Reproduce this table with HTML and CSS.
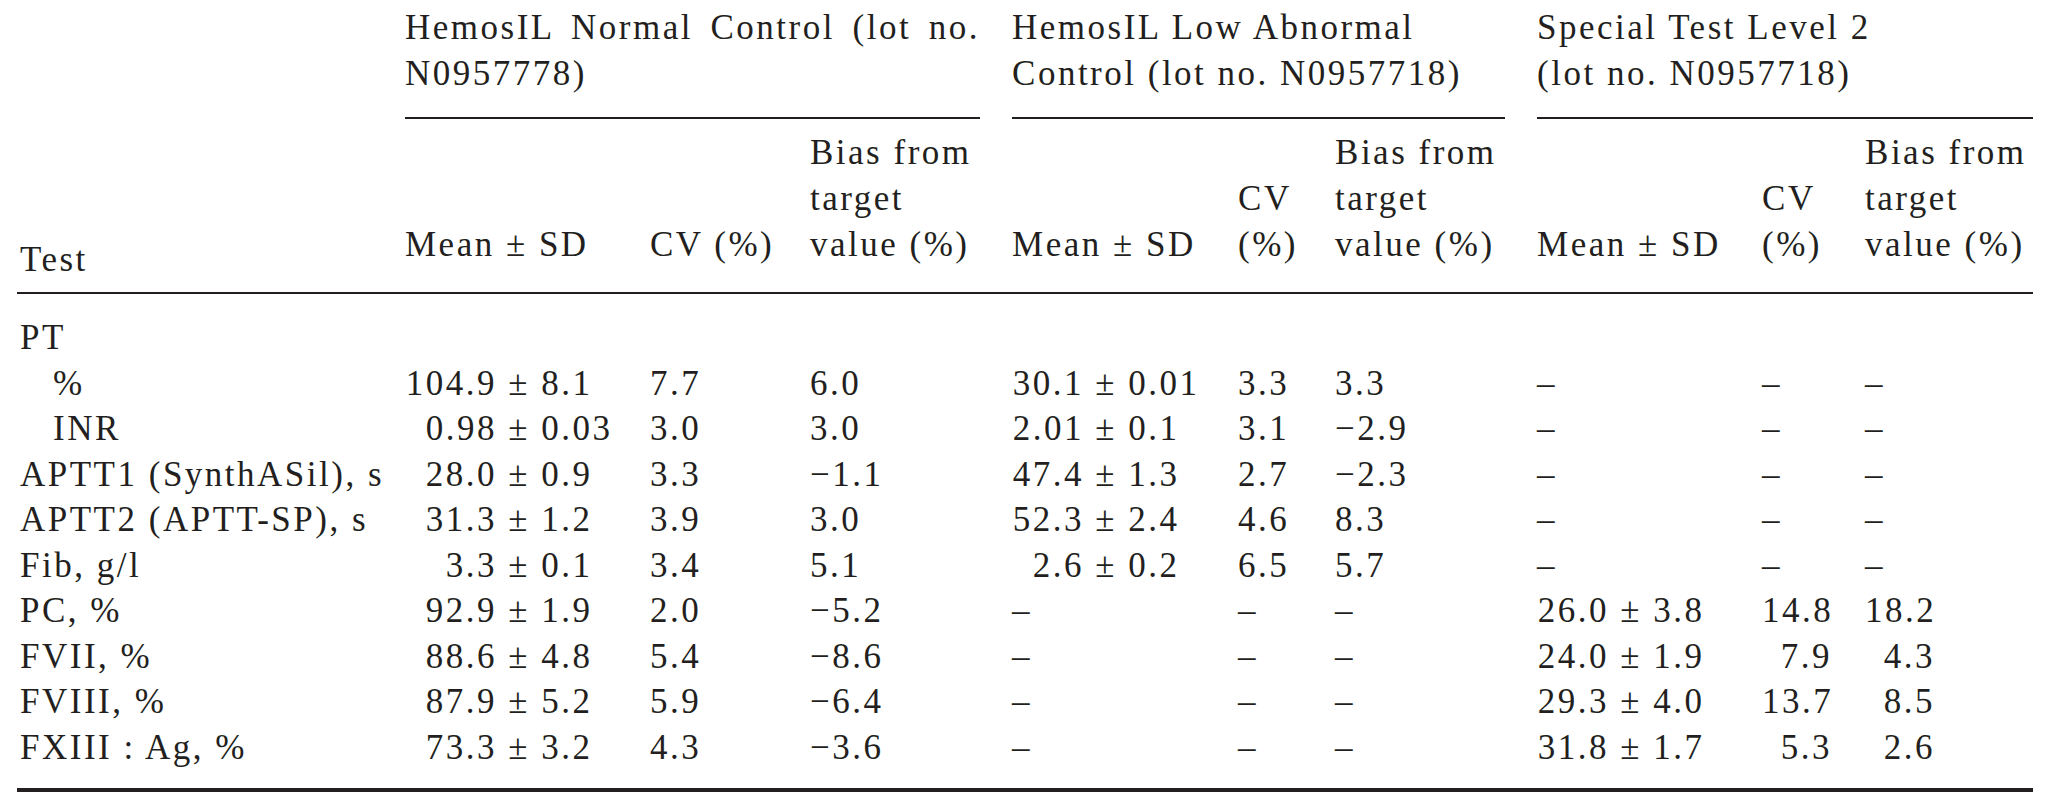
FILE: index.html
```html
<!DOCTYPE html>
<html lang="en">
<head>
<meta charset="utf-8">
<title>Quality control results</title>
<link rel="stylesheet" href="styles.css">
</head>
<body>
<table class="tbl">
  <colgroup>
    <col class="w-test">
    <col class="w-m1"><col class="w-cv1"><col class="w-b1">
    <col class="w-m2"><col class="w-cv2"><col class="w-b2">
    <col class="w-m3"><col class="w-cv3"><col class="w-b3">
  </colgroup>
  <thead>
    <tr class="hrow1">
      <th class="blank"></th>
      <th class="grp gap" colspan="3"><div class="grp-title"><span class="jline">HemosIL Normal Control (lot no.</span><span class="line">N0957778)</span></div></th>
      <th class="grp gap" colspan="3"><div class="grp-title">HemosIL Low Abnormal<br>Control (lot no. N0957718)</div></th>
      <th class="grp" colspan="3"><div class="grp-title">Special Test Level 2<br>(lot no. N0957718)</div></th>
    </tr>
    <tr class="hrow2">
      <th class="th-test">Test</th>
      <th>Mean ± SD</th>
      <th>CV (%)</th>
      <th>Bias from<br>target<br>value (%)</th>
      <th>Mean ± SD</th>
      <th>CV<br>(%)</th>
      <th>Bias from<br>target<br>value (%)</th>
      <th>Mean ± SD</th>
      <th>CV<br>(%)</th>
      <th>Bias from<br>target<br>value (%)</th>
    </tr>
  </thead>
  <tbody>
    <tr class="first">
      <td class="c-test">PT</td>
      <td></td><td></td><td></td>
      <td></td><td></td><td></td>
      <td></td><td></td><td></td>
    </tr>
    <tr>
      <td class="c-test sub">%</td>
      <td><span class="lhs1">104.9</span> ± 8.1</td><td>7.7</td><td>6.0</td>
      <td><span class="lhs2">30.1</span> ± 0.01</td><td>3.3</td><td>3.3</td>
      <td>–</td><td>–</td><td>–</td>
    </tr>
    <tr>
      <td class="c-test sub">INR</td>
      <td><span class="lhs1">0.98</span> ± 0.03</td><td>3.0</td><td>3.0</td>
      <td><span class="lhs2">2.01</span> ± 0.1</td><td>3.1</td><td>−2.9</td>
      <td>–</td><td>–</td><td>–</td>
    </tr>
    <tr>
      <td class="c-test">APTT1 (SynthASil), s</td>
      <td><span class="lhs1">28.0</span> ± 0.9</td><td>3.3</td><td>−1.1</td>
      <td><span class="lhs2">47.4</span> ± 1.3</td><td>2.7</td><td>−2.3</td>
      <td>–</td><td>–</td><td>–</td>
    </tr>
    <tr>
      <td class="c-test">APTT2 (APTT-SP), s</td>
      <td><span class="lhs1">31.3</span> ± 1.2</td><td>3.9</td><td>3.0</td>
      <td><span class="lhs2">52.3</span> ± 2.4</td><td>4.6</td><td>8.3</td>
      <td>–</td><td>–</td><td>–</td>
    </tr>
    <tr>
      <td class="c-test">Fib, g/l</td>
      <td><span class="lhs1">3.3</span> ± 0.1</td><td>3.4</td><td>5.1</td>
      <td><span class="lhs2">2.6</span> ± 0.2</td><td>6.5</td><td>5.7</td>
      <td>–</td><td>–</td><td>–</td>
    </tr>
    <tr>
      <td class="c-test">PC, %</td>
      <td><span class="lhs1">92.9</span> ± 1.9</td><td>2.0</td><td>−5.2</td>
      <td>–</td><td>–</td><td>–</td>
      <td><span class="lhs2">26.0</span> ± 3.8</td><td><span class="rnum">14.8</span></td><td><span class="rnum">18.2</span></td>
    </tr>
    <tr>
      <td class="c-test">FVII, %</td>
      <td><span class="lhs1">88.6</span> ± 4.8</td><td>5.4</td><td>−8.6</td>
      <td>–</td><td>–</td><td>–</td>
      <td><span class="lhs2">24.0</span> ± 1.9</td><td><span class="rnum">7.9</span></td><td><span class="rnum">4.3</span></td>
    </tr>
    <tr>
      <td class="c-test">FVIII, %</td>
      <td><span class="lhs1">87.9</span> ± 5.2</td><td>5.9</td><td>−6.4</td>
      <td>–</td><td>–</td><td>–</td>
      <td><span class="lhs2">29.3</span> ± 4.0</td><td><span class="rnum">13.7</span></td><td><span class="rnum">8.5</span></td>
    </tr>
    <tr class="last">
      <td class="c-test">FXIII : Ag, %</td>
      <td><span class="lhs1">73.3</span> ± 3.2</td><td>4.3</td><td>−3.6</td>
      <td>–</td><td>–</td><td>–</td>
      <td><span class="lhs2">31.8</span> ± 1.7</td><td><span class="rnum">5.3</span></td><td><span class="rnum">2.6</span></td>
    </tr>
  </tbody>
</table>
</body>
</html>
```

FILE: styles.css
```css
html, body {
  margin: 0;
  padding: 0;
  background: #ffffff;
}

.tbl {
  border-collapse: separate;
  border-spacing: 0;
  table-layout: fixed;
  width: 2016px;
  margin-left: 17px;
  font-family: "Liberation Serif", "Times New Roman", serif;
  font-size: 35px;
  letter-spacing: 2.5px;
  color: #231f20;
}

.w-test { width: 388px; }
.w-m1 { width: 245px; }
.w-cv1 { width: 160px; }
.w-b1 { width: 202px; }
.w-m2 { width: 226px; }
.w-cv2 { width: 97px; }
.w-b2 { width: 202px; }
.w-m3 { width: 225px; }
.w-cv3 { width: 103px; }
.w-b3 { width: 168px; }

.tbl th,
.tbl td {
  padding: 0;
  text-align: left;
  font-weight: normal;
}

/* header row 1: group titles */
.hrow1 th {
  vertical-align: top;
  line-height: 46px;
  padding-top: 5px;
}

.hrow1 th.gap {
  padding-right: 32px;
}

.grp-title {
  padding-bottom: 20px;
  border-bottom: 2px solid #231f20;
}

.jline {
  display: block;
  text-align: justify;
  text-align-last: justify;
}

.line {
  display: block;
}

/* header row 2: column titles */
.hrow2 th {
  vertical-align: bottom;
  line-height: 46px;
  padding-top: 11px;
  padding-bottom: 24px;
  border-bottom: 2px solid #231f20;
  white-space: nowrap;
}

.hrow2 th.th-test {
  padding-left: 3px;
  padding-bottom: 9px;
}

/* body */
.tbl td {
  line-height: 45.5px;
  vertical-align: baseline;
  white-space: nowrap;
}

.tbl td.c-test {
  padding-left: 3px;
}

.tbl td.sub {
  padding-left: 36px;
}

.tbl tr.first td {
  padding-top: 21px;
}

.tbl tr.last td {
  padding-bottom: 18px;
  border-bottom: 4px solid #231f20;
}

.lhs1 {
  display: inline-block;
  width: 92px;
  text-align: right;
}

.lhs2 {
  display: inline-block;
  width: 72px;
  text-align: right;
}

.rnum {
  display: inline-block;
  width: 70px;
  text-align: right;
}
```
